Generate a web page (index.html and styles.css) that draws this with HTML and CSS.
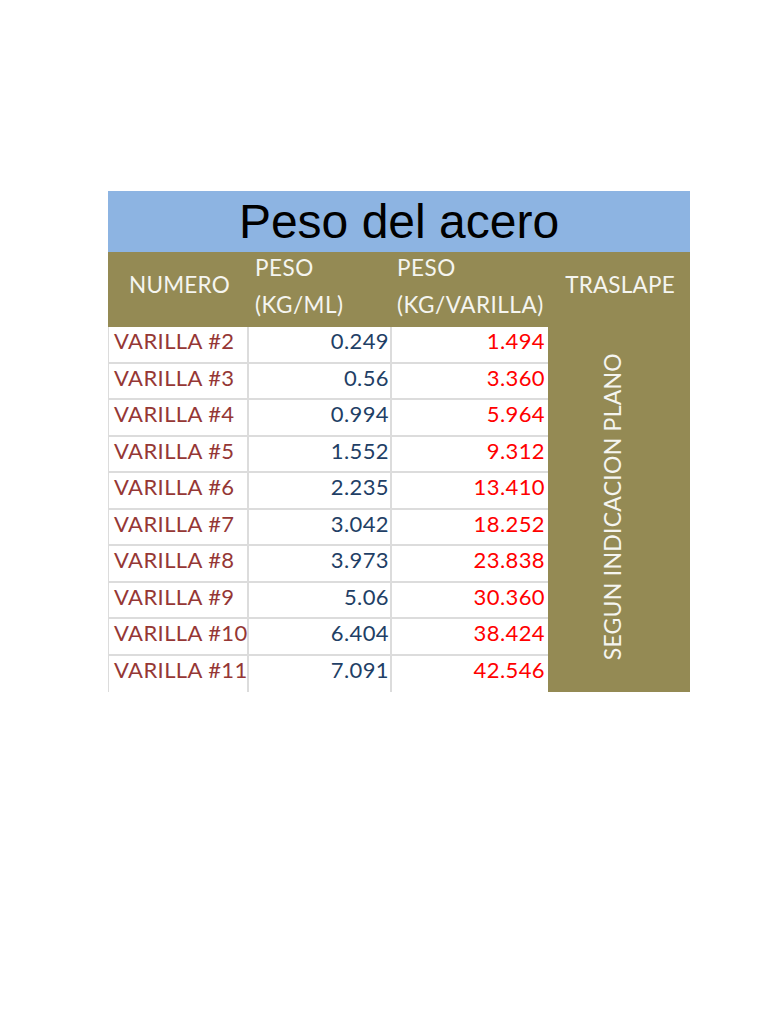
FILE: index.html
```html
<!DOCTYPE html>
<html lang="es">
<head>
<meta charset="utf-8">
<title>Peso del acero</title>
<link rel="stylesheet" href="styles.css">
</head>
<body>
<div class="page">
  <div class="sheet">
    <div class="title">Peso del acero</div>
    <div class="hd hd-center">NUMERO</div>
    <div class="hd hd-left"><span class="hd-lines">PESO<br>(KG/ML)</span></div>
    <div class="hd hd-left"><span class="hd-lines">PESO<br>(KG/VARILLA)</span></div>
    <div class="hd hd-center">TRASLAPE</div>
    <div class="traslape"><span class="vtext">SEGUN INDICACION PLANO</span></div>

    <div class="c name">VARILLA #2</div><div class="c kgml">0.249</div><div class="c kgv">1.494</div>
    <div class="c name">VARILLA #3</div><div class="c kgml">0.56</div><div class="c kgv">3.360</div>
    <div class="c name">VARILLA #4</div><div class="c kgml">0.994</div><div class="c kgv">5.964</div>
    <div class="c name">VARILLA #5</div><div class="c kgml">1.552</div><div class="c kgv">9.312</div>
    <div class="c name">VARILLA #6</div><div class="c kgml">2.235</div><div class="c kgv">13.410</div>
    <div class="c name">VARILLA #7</div><div class="c kgml">3.042</div><div class="c kgv">18.252</div>
    <div class="c name">VARILLA #8</div><div class="c kgml">3.973</div><div class="c kgv">23.838</div>
    <div class="c name">VARILLA #9</div><div class="c kgml">5.06</div><div class="c kgv">30.360</div>
    <div class="c name">VARILLA #10</div><div class="c kgml">6.404</div><div class="c kgv">38.424</div>
    <div class="c name last">VARILLA #11</div><div class="c kgml last">7.091</div><div class="c kgv last">42.546</div>
  </div>
</div>
</body>
</html>
```

FILE: styles.css
```css
html, body {
  margin: 0;
  padding: 0;
  background: #ffffff;
}

.page {
  padding: 191px 0 0 108px;
}

.sheet {
  display: grid;
  grid-template-columns: 141px 143px 156px 142px;
  grid-template-rows: 61px 75px repeat(10, 36.5px);
  width: 582px;
  font-family: Lato, "Open Sans", sans-serif;
  font-size: 22px;
  letter-spacing: 0.4px;
}

.title {
  grid-column: 1 / span 4;
  background: #8db4e2;
  color: #000000;
  font-family: "Liberation Sans", Arial, sans-serif;
  font-size: 48px;
  letter-spacing: 0;
  text-align: center;
  line-height: 61px;
}

.hd {
  background: #948a54;
  color: #f5f5f0;
  box-sizing: border-box;
  font-size: 22.5px;
  letter-spacing: 0.5px;
}

.hd-center {
  text-align: center;
  line-height: 65px;
  padding-bottom: 10px;
  padding-left: 2px;
  letter-spacing: 0.2px;
}

.hd-left {
  padding-left: 6px;
}

.hd-lines {
  display: block;
  line-height: 36.5px;
  margin-top: -2px;
}

.hd-left + .hd-left {
  padding-left: 5px;
}

.traslape {
  grid-column: 4;
  grid-row: 3 / span 10;
  background: #948a54;
  color: #f5f5f0;
  display: flex;
  align-items: center;
  justify-content: center;
  padding-right: 14px;
  padding-bottom: 6px;
}

.vtext {
  writing-mode: vertical-rl;
  transform: rotate(180deg);
  white-space: nowrap;
  line-height: 26px;
  font-size: 23px;
  letter-spacing: 0.25px;
}

.c {
  box-sizing: border-box;
  line-height: 28px;
  border-bottom: 2px solid #dcdcdc;
  border-right: 2px solid #dcdcdc;
  white-space: nowrap;
  background: #ffffff;
}

.c.last {
  border-bottom: none;
}

.name {
  color: #953735;
  padding-left: 5px;
  border-left: 1px solid #dcdcdc;
}

.kgml {
  color: #1f3f66;
  text-align: right;
  padding-right: 1px;
}

.kgv {
  color: #ff0000;
  text-align: right;
  padding-right: 3px;
  border-right: none;
}
```
